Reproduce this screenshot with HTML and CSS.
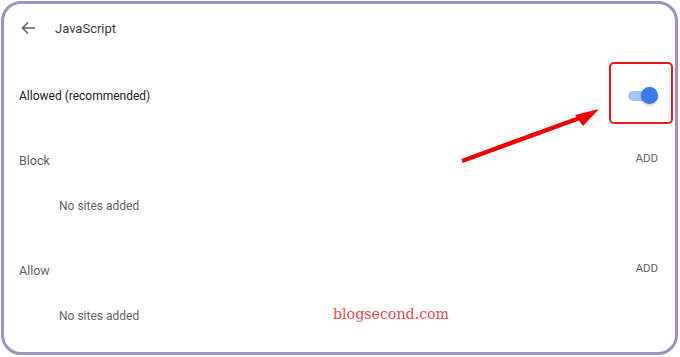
FILE: index.html
```html
<!DOCTYPE html>
<html>
<head>
<meta charset="utf-8">
<link rel="stylesheet" href="styles.css">
</head>
<body>
<div class="frame">
  <div class="header">
    <svg class="back" width="16" height="16" viewBox="0 0 16 16"><path d="M15 8H2.5M8 2.5L2.5 8L8 13.5" fill="none" stroke="#5f6368" stroke-width="1.6"/></svg>
    <span class="title">JavaScript</span>
  </div>
  <div class="row allowed">
    <span class="label-main">Allowed (recommended)</span>
    <div class="toggle"><div class="track"></div><div class="knob"></div></div>
  </div>
  <div class="row section">
    <span class="label">Block</span>
    <span class="add">ADD</span>
  </div>
  <div class="row empty"><span>No sites added</span></div>
  <div class="row section second">
    <span class="label">Allow</span>
    <span class="add">ADD</span>
  </div>
  <div class="row empty"><span>No sites added</span></div>
</div>
<div class="highlight"></div>
<svg class="pointer" width="680" height="357" viewBox="0 0 680 357">
  <line x1="462" y1="161" x2="585" y2="116" stroke="#f00000" stroke-width="4.5"/>
  <polygon points="599,109 575,115 583,126" fill="#f00000"/>
</svg>
<div class="watermark">blogsecond.com</div>
</body>
</html>
```
FILE: styles.css
```css
html, body { margin: 0; padding: 0; background: #ffffff; }
body { width: 680px; height: 357px; position: relative; overflow: hidden; font-family: Roboto, "Liberation Sans", sans-serif; }
.frame {
  margin: 1px 0 0 1px;
  width: 677px;
  height: 354px;
  box-sizing: border-box;
  border: 3px solid #a290c2;
  border-radius: 20px;
  padding: 0 17px 0 15px;
}
.header { height: 48px; display: flex; align-items: center; }
.back { margin-left: 1px; }
.title { margin-left: 19px; font-size: 13px; color: #3c4043; }
.row { display: flex; align-items: center; justify-content: space-between; }
.allowed { height: 88px; }
.label-main { font-size: 12px; color: #202124; }
.section { height: 40px; }
.second { margin-top: 18px; }
.label { font-size: 12.5px; color: #5f6368; }
.add { font-size: 11.5px; color: #5f6368; margin-top: -5px; }
.empty { height: 52px; padding-left: 40px; font-size: 12px; color: #5f6368; }
.toggle { position: relative; width: 32px; height: 20px; margin-right: 0; }
.track { position: absolute; left: 2px; top: 5px; width: 26px; height: 10px; border-radius: 5px; background: #a9c5f8; }
.knob { position: absolute; right: 0; top: 1px; width: 17px; height: 17px; border-radius: 50%; background: #3b7be9; box-shadow: 0 1px 3px rgba(0,0,0,0.3); }
.highlight { position: absolute; left: 609px; top: 62px; width: 64px; height: 62px; box-sizing: border-box; border: 2px solid #e41b1b; border-radius: 5px; }
.pointer { position: absolute; left: 0; top: 0; }
.watermark { position: absolute; left: 333px; top: 306px; font-family: "DejaVu Serif", serif; font-size: 14.2px; color: #e05050; }
```
